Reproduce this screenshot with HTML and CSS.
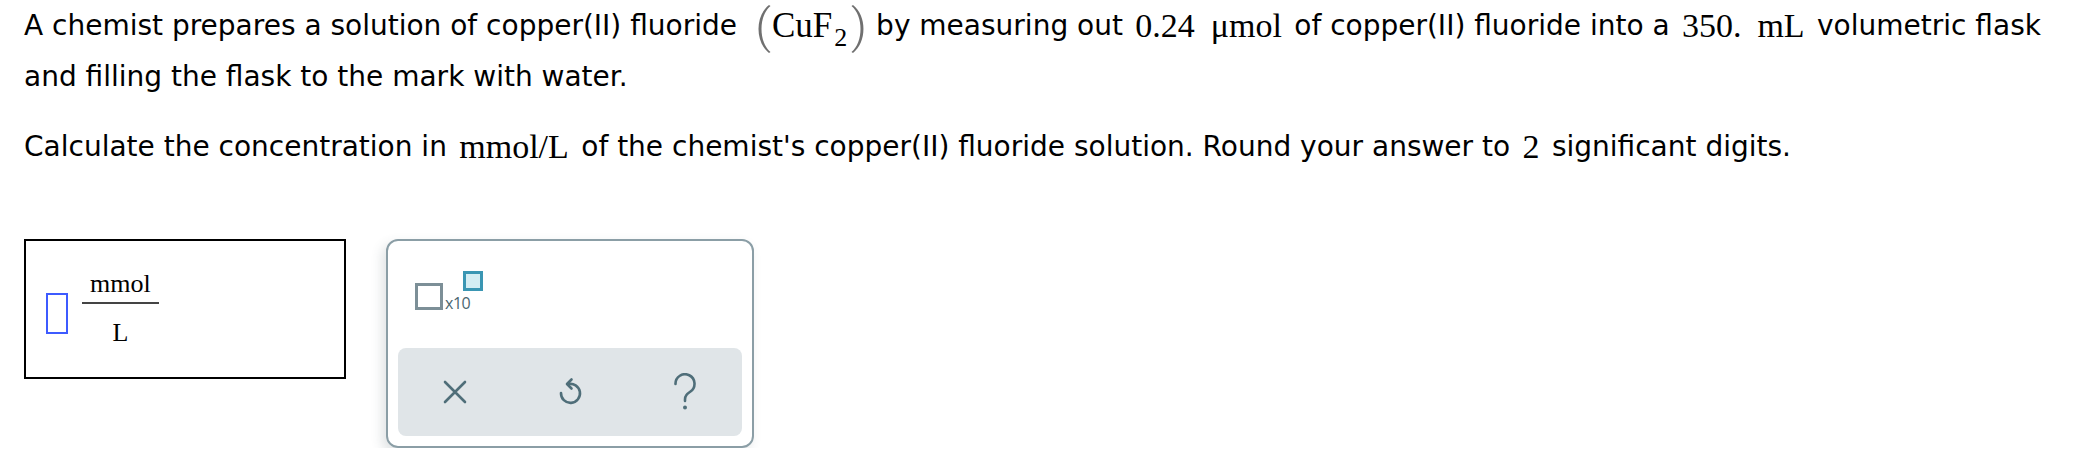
FILE: index.html
```html
<!DOCTYPE html>
<html>
<head>
<meta charset="utf-8">
<link rel="stylesheet" href="styles.css">
</head>
<body>
<div class="page">
  <p class="q q1">A chemist prepares a solution of copper(II) fluoride <span class="chem"><svg class="paren pl" viewBox="0 0 16 50"><path d="M14 1 C0 12 0 38 14 49 L15.5 48 C3.5 38 3.5 12 15.5 2 Z"/></svg><span class="cuf">CuF</span><sub class="sub">2</sub><svg class="paren pr" viewBox="0 0 16 50"><path d="M2 1 C16 12 16 38 2 49 L0.5 48 C12.5 38 12.5 12 0.5 2 Z"/></svg></span> by measuring out <span class="m">0.24</span> <span class="m">μmol</span> of copper(II) fluoride into a <span class="m">350.</span> <span class="m">mL</span> volumetric flask and filling the flask to the mark with water.</p>
  <p class="q q2">Calculate the concentration in <span class="m">mmol/L</span> of the chemist's copper(II) fluoride solution. Round your answer to <span class="m">2</span> significant digits.</p>
  <div class="answer-row">
    <div class="answer">
      <span class="slot"></span>
      <span class="frac">
        <span class="num">mmol</span>
        <span class="den">L</span>
      </span>
    </div>
    <div class="palette">
      <div class="tools">
        <div class="sci">
          <span class="box"></span><span class="x10">x10</span><span class="exp"></span>
        </div>
      </div>
      <div class="actions">
        <div class="act">
          <svg width="26" height="26" viewBox="0 0 26 26"><path d="M3 3 L23 23 M23 3 L3 23"/></svg>
        </div>
        <div class="act">
          <svg width="28" height="32" viewBox="0 0 28 32"><path d="M5 17 A9.5 9.5 0 1 0 12 8.2"/><path d="M15.5 3.5 L11 8 L15.5 12.5"/></svg>
        </div>
        <div class="act">
          <svg width="26" height="38" viewBox="0 0 26 38"><path d="M3.5 11 A9.5 9.5 0 1 1 18.5 18.5 C15 21 13 22.5 13 26.5 V28"/><circle class="dot" cx="13" cy="34.5" r="2"/></svg>
        </div>
      </div>
    </div>
  </div>
</div>
</body>
</html>
```
FILE: styles.css
```css
html, body {
  margin: 0;
  padding: 0;
  background: #fff;
}
.page {
  padding: 0 28px 0 24px;
  font-family: "DejaVu Sans", Verdana, sans-serif;
  font-size: 28px;
  color: #000;
}
.q {
  margin: 0;
  line-height: 49px;
}
.q1 {
  line-height: 51px;
}
.q2 {
  margin-top: 20px;
}
.m {
  font-family: "Liberation Serif", "Times New Roman", serif;
  font-size: 34px;
  line-height: 1;
  margin: 0 3.5px;
  vertical-align: -2px;
}
.chem {
  white-space: nowrap;
  font-family: "Liberation Serif", "Times New Roman", serif;
  font-size: 35px;
  line-height: 1;
  margin-left: 9px;
  vertical-align: -2px;
}
.paren {
  width: 16px;
  height: 50px;
  margin-top: -12px;
  margin-bottom: -12px;
  vertical-align: -5px;
  fill: #707070;
}
.pl {
  margin-right: 1px;
}
.pr {
  margin-left: 4px;
}
.sub {
  font-size: 26px;
  vertical-align: -9px;
  line-height: 0;
  margin-left: 2px;
}
.answer-row {
  display: flex;
  align-items: flex-start;
  gap: 40px;
  margin-top: 68px;
}
.answer {
  width: 298px;
  height: 136px;
  border: 2px solid #000;
  display: flex;
  align-items: center;
  gap: 14px;
  padding-left: 20px;
}
.slot {
  width: 18px;
  height: 37px;
  border: 2px solid #3e5bff;
  margin-top: 8px;
}
.frac {
  display: flex;
  flex-direction: column;
  align-items: center;
  font-family: "Liberation Serif", "Times New Roman", serif;
  font-size: 26px;
  line-height: 1;
  margin-top: -2px;
}
.num {
  padding: 0 8px 5px;
  border-bottom: 2px solid #444;
}
.den {
  padding-top: 16px;
}
.palette {
  box-sizing: border-box;
  width: 368px;
  height: 209px;
  border: 2px solid #8b9ea6;
  border-radius: 12px;
  box-shadow: -4px 5px 12px rgba(60, 80, 90, 0.16);
  padding: 0 10px 10px;
  display: flex;
  flex-direction: column;
}
.tools {
  flex: 1;
  padding-left: 17px;
  padding-top: 30px;
}
.sci {
  display: flex;
  align-items: flex-start;
  position: relative;
  width: 80px;
  height: 40px;
}
.box {
  width: 22px;
  height: 21px;
  border: 3px solid #7c8f97;
  margin-top: 12px;
}
.x10 {
  font-family: "Open Sans", "Liberation Sans", sans-serif;
  font-size: 16px;
  color: #4a6670;
  margin-top: 21px;
  margin-left: 2px;
  letter-spacing: -0.5px;
}
.exp {
  position: absolute;
  left: 48px;
  top: 0;
  width: 14px;
  height: 14px;
  border: 3px solid #3a96b3;
  background: #d4edf3;
}
.actions {
  height: 88px;
  background: #e0e5e8;
  border-radius: 8px;
  display: grid;
  grid-template-columns: 1fr 1fr 1fr;
  align-items: center;
  justify-items: center;
}
.act svg {
  display: block;
  fill: none;
  stroke: #4f6e79;
  stroke-width: 2.6;
  stroke-linecap: round;
  stroke-linejoin: round;
}
.act .dot {
  fill: #4f6e79;
  stroke: none;
}
```
